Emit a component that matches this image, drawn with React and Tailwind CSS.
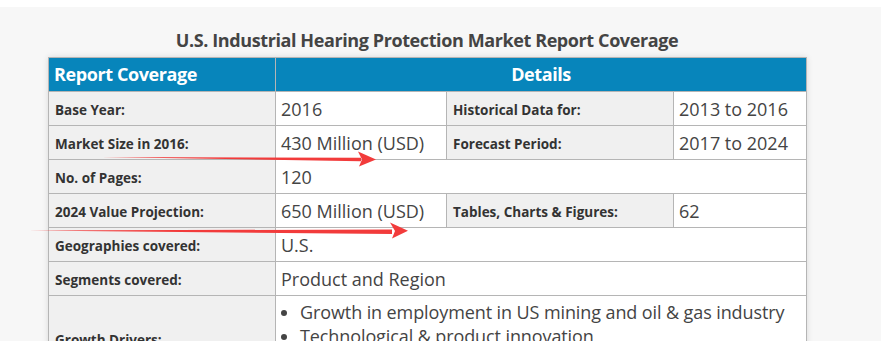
const rows = [
  { type: "pair", a: ["Base Year:", "2016"], b: ["Historical Data for:", "2013 to 2016"] },
  { type: "pair", a: ["Market Size in 2016:", "430 Million (USD)"], b: ["Forecast Period:", "2017 to 2024"] },
  { type: "wide", label: "No. of Pages:", value: "120" },
  { type: "pair", a: ["2024 Value Projection:", "650 Million (USD)"], b: ["Tables, Charts & Figures:", "62"] },
  { type: "wide", label: "Geographies covered:", value: "U.S." },
  { type: "wide", label: "Segments covered:", value: "Product and Region" },
];

const drivers = [
  "Growth in employment in US mining and oil & gas industry",
  "Technological & product innovation",
  "Stringent workplace safety regulations",
];

function Label({ children }) {
  return (
    <td className="border border-[#b5b5b5] bg-[#f0f0f0] px-[6px] pt-[3px] text-[13.5px] font-bold text-[#333] align-middle">
      {children}
    </td>
  );
}

function Value({ children, span }) {
  return (
    <td colSpan={span} className="border border-[#b5b5b5] bg-white px-[5px] text-[18px] leading-[24px] text-[#444] align-middle">
      {children}
    </td>
  );
}

function Arrows() {
  return (
    <svg className="absolute left-0 top-0 pointer-events-none" width="881" height="341">
      <polygon points="102,157 361,157.8 361,161.2" fill="#f23b3b" />
      <polygon points="358,151.5 376,159.5 359,166.5 362,159.5" fill="#f23b3b" />
      <polygon points="29,230.5 392,229.5 392,234" fill="#f23b3b" />
      <polygon points="390,222.5 408,230.8 392,238.5 395,231" fill="#f23b3b" />
    </svg>
  );
}

export default function App() {
  return (
    <div className="relative w-[881px] h-[341px] overflow-hidden bg-white" style={{ fontFamily: '"Open Sans", "Noto Sans", sans-serif' }}>
      <div className="mt-[7px] h-[334px] bg-[#f7f7f7] pl-[48px]">
        <div className="w-[758px]">
          <h2 className="h-[50px] pt-[21px] text-center text-[18px] leading-[24px] font-bold tracking-[-0.4px] text-[#444]">
            U.S. Industrial Hearing Protection Market Report Coverage
          </h2>
          <table className="w-[758px] table-fixed border-collapse shadow-[0_0_6px_rgba(0,0,0,0.12)]">
            <colgroup>
              <col className="w-[227px]" />
              <col className="w-[171px]" />
              <col className="w-[227px]" />
              <col className="w-[133px]" />
            </colgroup>
            <thead>
              <tr className="h-[34px] bg-[#0785bb] text-white text-[18px] font-bold tracking-[-0.4px]">
                <th className="border border-[#b5b5b5] px-[5px] text-left">Report Coverage</th>
                <th colSpan={3} className="border border-[#b5b5b5] text-center">Details</th>
              </tr>
            </thead>
            <tbody>
              {rows.map((r, i) =>
                r.type === "pair" ? (
                  <tr key={i} className="h-[34px]">
                    <Label>{r.a[0]}</Label>
                    <Value>{r.a[1]}</Value>
                    <Label>{r.b[0]}</Label>
                    <Value>{r.b[1]}</Value>
                  </tr>
                ) : (
                  <tr key={i} className="h-[34px]">
                    <Label>{r.label}</Label>
                    <Value span={3}>{r.value}</Value>
                  </tr>
                )
              )}
              <tr>
                <Label>Growth Drivers:</Label>
                <Value span={3}>
                  <ul className="pt-[4px] pb-[10px] pl-[19px] list-disc leading-[24px] tracking-[-0.1px]">
                    {drivers.map((d) => (
                      <li key={d}>{d}</li>
                    ))}
                  </ul>
                </Value>
              </tr>
            </tbody>
          </table>
        </div>
      </div>
      <Arrows />
    </div>
  );
}
